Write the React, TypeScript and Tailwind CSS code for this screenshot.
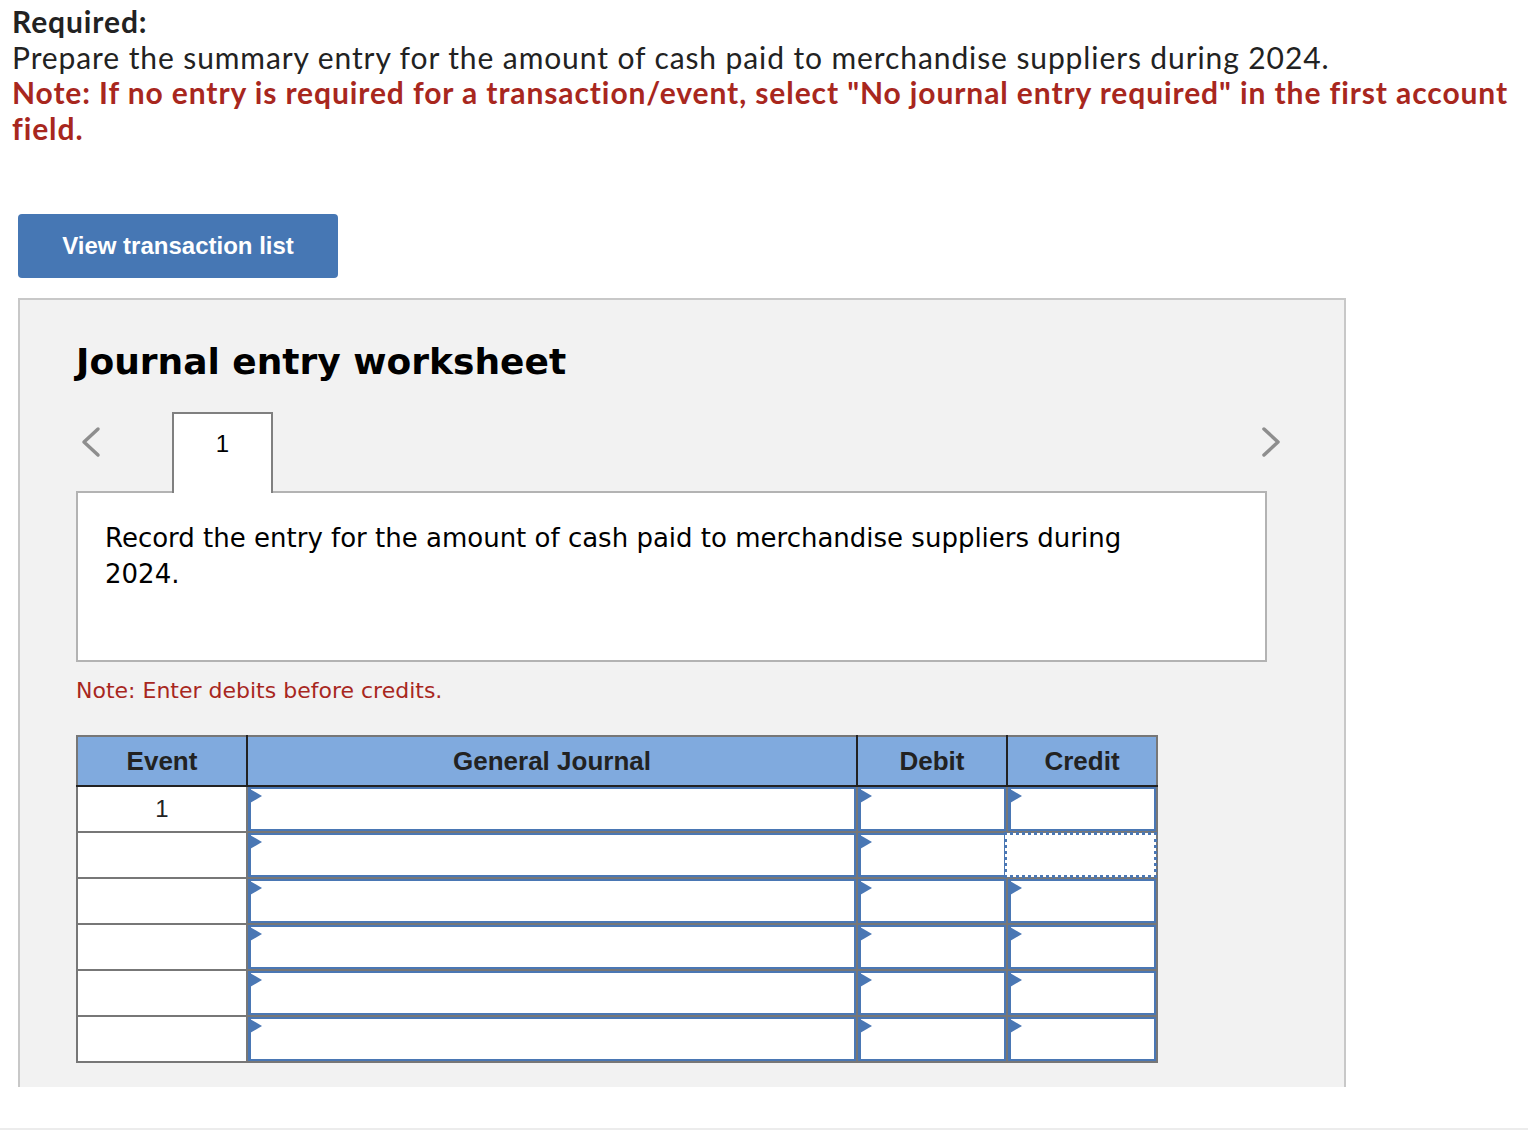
import React from "react";

const rows = [1, 2, 3, 4, 5, 6];

const InputCell: React.FC<{ focused?: boolean }> = ({ focused }) => {
  if (focused) {
    return (
      <div className="relative h-[44px] -ml-[3px] bg-white outline-dotted outline-[3px] -outline-offset-[2px] outline-[#4a77b4]" />
    );
  }
  return (
    <div className="relative h-[44px] bg-white border-2 border-l-[3px] border-[#4a77b4]">
      {/* little flag marking the dropdown cell */}
      <span className="absolute -left-[1px] top-0 w-[12px] h-[14px] bg-[#4a77b4] [clip-path:polygon(0_0,100%_50%,0_100%)]" />
    </div>
  );
};

const Chevron: React.FC<{ dir: "left" | "right" }> = ({ dir }) => (
  <svg width="22" height="32" viewBox="0 0 22 32" fill="none">
    <polyline
      points={dir === "left" ? "18,3 4,16 18,29" : "4,3 18,16 4,29"}
      stroke="#8e8e8e"
      strokeWidth="3.5"
      strokeLinecap="round"
      strokeLinejoin="round"
    />
  </svg>
);

export default function App() {
  return (
    <div className="min-h-screen bg-white">
      {/* question header */}
      <div
        className="pl-[12px] pr-[2px] pt-[4px] text-[30px] leading-[35.5px] tracking-[0.9px] text-[#222]"
        style={{ fontFamily: "Lato, 'Liberation Sans', sans-serif" }}
      >
        <p className="font-bold">Required:</p>
        <p>Prepare the summary entry for the amount of cash paid to merchandise suppliers during 2024.</p>
        <p className="font-bold text-[#a8271e]">
          Note: If no entry is required for a transaction/event, select "No journal entry required" in the first account field.
        </p>
      </div>

      <div className="pl-[18px] pr-[182px]">
        <button
          className="mt-[68px] w-[320px] h-[64px] rounded-[4px] bg-[#4677b4] text-white text-[24px] font-bold"
          style={{ fontFamily: "'Liberation Sans', Arial, sans-serif" }}
        >
          View transaction list
        </button>

        {/* worksheet panel */}
        <div
          className="mt-[20px] w-[1328px] bg-[#f2f2f2] border-2 border-b-0 border-[#c8c8c8] pl-[56px] pt-[40px] pb-[24px]"
          style={{ fontFamily: "'DejaVu Sans', Verdana, sans-serif" }}
        >
          <h2 className="text-[36px] leading-[44px] font-bold text-black">Journal entry worksheet</h2>

          <div className="mt-[28px] w-[1214px] flex items-start justify-between">
            <div className="flex items-start">
              <div className="mt-[14px] ml-[4px]">
                <Chevron dir="left" />
              </div>
              <div className="ml-[70px] relative z-10 -mb-[2px] w-[101px] h-[81px] bg-white border-2 border-b-0 border-[#808080] flex justify-center pt-[14px]">
                <span className="text-[24px] leading-[32px] text-black" style={{ fontFamily: "'Liberation Sans', Arial, sans-serif" }}>1</span>
              </div>
            </div>
            <div className="mt-[14px] mr-[8px]">
              <Chevron dir="right" />
            </div>
          </div>

          <div className="w-[1191px] h-[171px] bg-white border-2 border-[#b3b3b3] pl-[27px] pt-[27px]">
            <p className="max-w-[1050px] text-[26px] leading-[36px] text-black">
              Record the entry for the amount of cash paid to merchandise suppliers during 2024.
            </p>
          </div>

          <p className="mt-[15px] text-[22px] leading-[28px] text-[#a8271e]">Note: Enter debits before credits.</p>

          {/* journal grid */}
          <table
            className="mt-[30px] table-fixed border-collapse border-2 border-[#777]"
            style={{ fontFamily: "'Liberation Sans', Arial, sans-serif" }}
          >
            <colgroup>
              <col className="w-[170px]" />
              <col className="w-[610px]" />
              <col className="w-[150px]" />
              <col className="w-[150px]" />
            </colgroup>
            <thead>
              <tr className="h-[50px] bg-[#80aade] text-[26px] font-bold text-[#222]">
                <th className="border-2 border-[#222] border-t-[#777] border-l-[#777]">Event</th>
                <th className="border-2 border-[#222] border-t-[#777]">General Journal</th>
                <th className="border-2 border-[#222] border-t-[#777]">Debit</th>
                <th className="border-2 border-[#222] border-t-[#777] border-r-[#777]">Credit</th>
              </tr>
            </thead>
            <tbody>
              {rows.map((r) => (
                <tr key={r} className="h-[46px]">
                  <td className="border-2 border-[#777] bg-white text-center text-[24px] text-[#222] p-0">{r === 1 ? "1" : ""}</td>
                  <td className="border-2 border-[#777] p-0">
                    <InputCell />
                  </td>
                  <td className="border-2 border-[#777] p-0">
                    <InputCell />
                  </td>
                  <td className="border-2 border-[#777] p-0">
                    <InputCell focused={r === 2} />
                  </td>
                </tr>
              ))}
            </tbody>
          </table>
        </div>

        <div className="h-[41px]" />
      </div>
      <div className="h-[2px] bg-[#ececec]" />
    </div>
  );
}
